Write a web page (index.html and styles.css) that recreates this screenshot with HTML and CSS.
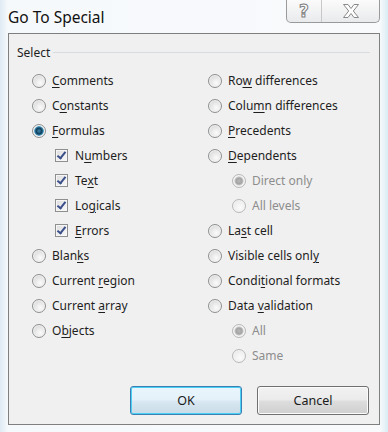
FILE: index.html
```html
<!DOCTYPE html>
<html lang="en">
<head>
    <meta charset="UTF-8">
    <meta name="viewport" content="width=device-width, initial-scale=1.0">
    <title>Go To Special</title>
    <link rel="stylesheet" href="styles.css">
</head>
<body>
    <div class="titlebar">
        <span class="title">Go To Special</span>
        <div class="caption">
            <span class="cap-btn cap-help"><span class="help-glyph">?</span></span>
            <span class="cap-btn cap-close">
                <svg width="22" height="16" viewBox="0 0 22 16">
                    <path d="M3.5 1.5 H8 L11 5.5 L14 1.5 H18.5 L13.3 8 L18.5 14.5 H14 L11 10.5 L8 14.5 H3.5 L8.7 8 Z" fill="#fdfdfd" stroke="#8a8a8a" stroke-width="1" stroke-linejoin="round"/>
                </svg>
            </span>
        </div>
    </div>

    <div class="panel">
        <div class="group">
            <div class="legend"><span class="legend-text">Select</span><span class="legend-line"></span></div>
            <div class="columns">
                <div class="col">
                    <div class="opt"><span class="radio"></span><span class="lbl"><u>C</u>omments</span></div>
                    <div class="opt"><span class="radio"></span><span class="lbl">C<u>o</u>nstants</span></div>
                    <div class="opt"><span class="radio checked"></span><span class="lbl"><u>F</u>ormulas</span></div>
                    <div class="opt sub-check"><span class="check"></span><span class="lbl">N<u>u</u>mbers</span></div>
                    <div class="opt sub-check"><span class="check"></span><span class="lbl">Te<u>x</u>t</span></div>
                    <div class="opt sub-check"><span class="check"></span><span class="lbl">Lo<u>g</u>icals</span></div>
                    <div class="opt sub-check"><span class="check"></span><span class="lbl"><u>E</u>rrors</span></div>
                    <div class="opt"><span class="radio"></span><span class="lbl">Blan<u>k</u>s</span></div>
                    <div class="opt"><span class="radio"></span><span class="lbl">Current <u>r</u>egion</span></div>
                    <div class="opt"><span class="radio"></span><span class="lbl">Current <u>a</u>rray</span></div>
                    <div class="opt"><span class="radio"></span><span class="lbl">O<u>b</u>jects</span></div>
                </div>
                <div class="col">
                    <div class="opt"><span class="radio"></span><span class="lbl">Ro<u>w</u> differences</span></div>
                    <div class="opt"><span class="radio"></span><span class="lbl">Colu<u>m</u>n differences</span></div>
                    <div class="opt"><span class="radio"></span><span class="lbl"><u>P</u>recedents</span></div>
                    <div class="opt"><span class="radio"></span><span class="lbl"><u>D</u>ependents</span></div>
                    <div class="opt sub-radio disabled"><span class="radio checked"></span><span class="lbl">Direct only</span></div>
                    <div class="opt sub-radio disabled"><span class="radio"></span><span class="lbl">All levels</span></div>
                    <div class="opt"><span class="radio"></span><span class="lbl">La<u>s</u>t cell</span></div>
                    <div class="opt"><span class="radio"></span><span class="lbl">Visible cells onl<u>y</u></span></div>
                    <div class="opt"><span class="radio"></span><span class="lbl">Condi<u>t</u>ional formats</span></div>
                    <div class="opt"><span class="radio"></span><span class="lbl">Data <u>v</u>alidation</span></div>
                    <div class="opt sub-radio disabled"><span class="radio checked"></span><span class="lbl">All</span></div>
                    <div class="opt sub-radio disabled"><span class="radio"></span><span class="lbl">Same</span></div>
                </div>
            </div>
        </div>

        <div class="buttons">
            <button class="btn btn-default" type="button">OK</button>
            <button class="btn" type="button">Cancel</button>
        </div>
    </div>
</body>
</html>
```

FILE: styles.css
```css
body {
    margin: 0;
    width: 388px;
    height: 432px;
    overflow: hidden;
    font-family: "Noto Sans", "Open Sans", sans-serif;
    font-size: 12px;
    color: #1e1e1e;
    background: linear-gradient(90deg, #dfeaf3 0px, #f6f9fb 8px, #f8fafc 380px, #d9ecf4 388px);
}

/* barra del titolo */
.titlebar { height: 33px; display: flex; justify-content: space-between; align-items: flex-start; }
.title { font-size: 15.5px; margin: 6px 0 0 8px; color: #111; }
.caption { display: flex; margin-right: 8px; height: 22px; border: 1px solid #9a9a9a; border-top: none; border-radius: 0 0 5px 5px; background: linear-gradient(#fbfbfb, #e9eaec); overflow: hidden; }
.cap-btn { display: flex; align-items: center; justify-content: center; height: 22px; }
.cap-help { width: 34px; border-right: 1px solid #c8c8c8; }
.help-glyph { font-family: "DejaVu Sans", sans-serif; font-size: 17px; font-weight: bold; line-height: 17px; color: #fdfdfd; -webkit-text-stroke: 1px #7d7d7d; }
.cap-close { width: 57px; }

/* area del dialogo */
.panel {
    box-sizing: border-box;
    height: 392px;
    margin: 0 8px;
    border: 1px solid #7f7f7f;
    background-color: #f0f0f0;
    display: flex;
    flex-direction: column;
}
.group { padding-top: 10px; }
.legend { display: flex; align-items: center; height: 16px; padding-left: 8px; padding-right: 9px; }
.legend-text { margin-right: 3px; }
.legend-line { flex: 1; height: 1px; background-color: #d6dde2; }

.columns { display: grid; grid-template-columns: 176px 1fr; padding-left: 23px; margin-top: 8px; }
.opt { height: 25px; display: flex; align-items: center; gap: 6px; }
.opt u { text-decoration-thickness: 1px; text-underline-offset: 2px; }
.sub-check { padding-left: 23px; gap: 7px; }
.sub-radio { padding-left: 24px; }
.disabled { color: #8d8d8d; }

.radio {
    box-sizing: border-box;
    width: 14px;
    height: 14px;
    border-radius: 50%;
    border: 1px solid #8d8f90;
    background: radial-gradient(circle at 60% 65%, #fbfbfb 0%, #e8e8e8 45%, #c9cacb 100%);
    box-shadow: inset 0 0 0 1px #f4f4f4;
    flex-shrink: 0;
}
.radio.checked { background: radial-gradient(circle at 50% 50%, #3a86ad 0, #0e3e5a 3px, #4f9cc4 4.5px, #f0f0f0 5.5px, #d8d8d8 100%); }
.disabled .radio { border-color: #b7b8b9; background: radial-gradient(circle at 60% 65%, #fbfbfb 0%, #efefef 55%, #dcdcdc 100%); }
.disabled .radio.checked { background: radial-gradient(circle at 50% 50%, #b9b9b9 0, #a3a3a3 3px, #c4c4c4 4px, #f2f2f2 5px, #e2e2e2 100%); }

.check {
    box-sizing: border-box;
    width: 13px;
    height: 13px;
    border: 1px solid #8e8f8f;
    background: linear-gradient(135deg, #dcdcdc, #fafafa);
    box-shadow: inset 0 0 0 1px #f6f6f6;
    flex-shrink: 0;
    position: relative;
}
.check::after {
    content: "";
    position: absolute;
    left: 3px;
    top: 0px;
    width: 3px;
    height: 7px;
    border: solid #3a4f8a;
    border-width: 0 2px 2px 0;
    transform: rotate(38deg);
}

/* pulsanti */
.buttons { margin-top: auto; display: flex; justify-content: flex-end; gap: 15px; padding: 0 10px 9px 0; }
.btn {
    width: 112px;
    height: 29px;
    font-family: "Noto Sans", "Open Sans", sans-serif;
    font-size: 12.5px;
    color: #1a1a1a;
    border: 1px solid #707070;
    border-radius: 3px;
    background: linear-gradient(#f2f2f2 0%, #ebebeb 48%, #dddddd 52%, #cfcfcf 100%);
    box-shadow: inset 0 0 0 1px #fbfbfb;
}
.btn-default { border-color: #3c7fb1; box-shadow: inset 0 0 0 1px #48d0f7; background: linear-gradient(#eaf6fd 0%, #e5f1f9 48%, #d9e8f2 52%, #c9dbe7 100%); }
```
